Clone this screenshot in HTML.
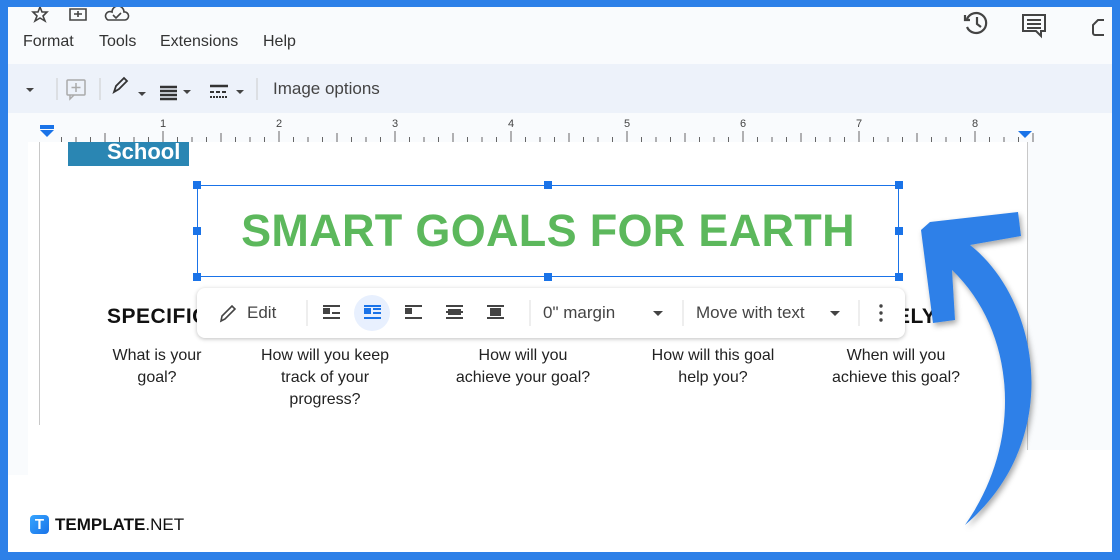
<!DOCTYPE html>
<html><head><meta charset="utf-8"><style>
*{margin:0;padding:0;box-sizing:border-box}
body{width:1120px;height:560px;background:#2d80e8;position:relative;overflow:hidden;font-family:"Liberation Sans",Arial,sans-serif}
.frame{position:absolute;left:8px;top:7px;width:1104px;height:545px;background:#fff;overflow:hidden}
.abs{position:absolute}
.menu{font-size:16px;color:#333;top:26px}
.tb{left:0;top:57px;width:1104px;height:49px;background:#edf2fa}
.ruler{left:0;top:106px;width:1104px;height:29px;background:#f9fbfd}
.col{font-size:16px;color:#222;text-align:center;line-height:22px;top:338px}
.h{font-size:21px;font-weight:bold;color:#111;top:298px;letter-spacing:.5px}
.hd{width:8px;height:8px;background:#1a73e8;position:absolute}
</style></head><body>
<div class="frame">
 <div class="abs" style="left:0;top:0;width:1104px;height:57px;background:#f9fbfd"></div>
 <svg class="abs" style="left:22px;top:0" width="110" height="16" viewBox="0 0 110 16" fill="none" stroke="#444" stroke-width="1.6">
  <path d="M10 0 L12 5 L17 5 L13 9 L15 14 L10 11 L5 14 L7 9 L3 5 L8 5 Z"/>
  <path d="M40 2 H56 V13 H40 Z M44 7 H52 M48 4 V10"/>
  <path d="M78 13 H95 A4 4 0 0 0 94 5 A6 6 0 0 0 82 5 A4 4 0 0 0 78 13 Z M83 8 L86 11 L91 6"/>
 </svg>
 <div class="abs menu" style="left:15px">Format</div>
 <div class="abs menu" style="left:91px">Tools</div>
 <div class="abs menu" style="left:152px">Extensions</div>
 <div class="abs menu" style="left:255px">Help</div>
 <svg class="abs" style="left:955px;top:4px" width="150" height="30" viewBox="0 0 150 30" fill="none" stroke="#444" stroke-width="2.2">
  <path d="M4 8 A10 10 0 1 1 4 16 M2 4 V9 H7 M14 6 V13 L18 16"/>
  <path d="M60 4 H82 V20 H78 V25 L73 20 H60 Z M64 9 H78 M64 13 H78 M64 17 H78" stroke-width="2"/>
  <path d="M141 24 H132 A2 2 0 0 1 130 22 V14 L135 9 H141" stroke-width="2"/>
 </svg>
 <div class="abs tb">
  <svg class="abs" style="left:0;top:0" width="380" height="49" viewBox="0 0 380 49">
   <path d="M18 24 h8 l-4 4z" fill="#444"/>
   <line x1="49" y1="14" x2="49" y2="36" stroke="#ccc"/>
   <rect x="59" y="16" width="18" height="15" rx="1" fill="none" stroke="#aaa" stroke-width="1.5"/>
   <path d="M62 31 v4 l4-4 M68 19 v9 M63.5 23.5 h9" stroke="#aaa" stroke-width="1.5" fill="none"/>
   <line x1="92" y1="14" x2="92" y2="36" stroke="#ccc"/>
   <path d="M106 28 l2-6 l8-8 l3 3 l-8 8z" fill="none" stroke="#333" stroke-width="1.8"/>
   <path d="M130 28 h8 l-4 4z M175 26 h8 l-4 4z M228 26 h8 l-4 4z" fill="#444"/>
   <path d="M152 23 h17 M152 27 h17 M152 31 h17 M152 35 h17" stroke="#333" stroke-width="2.5"/>
   <path d="M202 22 h18" stroke="#333" stroke-width="2.5"/>
   <path d="M202 28 h4 M208 28 h4 M214 28 h4 M202 33 h2 M205 33 h2 M208 33 h2 M211 33 h2 M214 33 h2 M217 33 h2" stroke="#333" stroke-width="2"/>
   <line x1="249" y1="14" x2="249" y2="36" stroke="#ccc"/>
  </svg>
  <div class="abs" style="left:265px;top:15px;font-size:17px;color:#444">Image options</div>
 </div>
 <div class="abs ruler">
  <svg class="abs" style="left:0;top:0" width="1104" height="29">
   <g stroke="#666" stroke-width="1" id="ticks"></g>
  </svg>
 </div>
 <div class="abs" style="left:0;top:135px;width:20px;height:333px;background:#f9fbfd"></div>
 <div class="abs" style="left:31px;top:135px;width:1px;height:283px;background:#c8c8c8"></div>
 <div class="abs" style="left:1019px;top:135px;width:85px;height:308px;background:#f9fbfd;border-left:1px solid #c8c8c8"></div>
 <div class="abs" style="left:60px;top:135px;width:121px;height:24px;background:#2a86b3;color:#fff;font-weight:bold;font-size:22px;line-height:20px;padding-left:39px">School</div>
 <div class="abs" style="left:189px;top:178px;width:702px;height:92px;border:1px solid #1a73e8"></div>
 <div class="abs" style="left:189px;top:198px;width:702px;text-align:center;color:#5cb85c;font-weight:bold;font-size:45px;letter-spacing:0.3px">SMART GOALS FOR EARTH</div>
 <div class="hd" style="left:185px;top:174px"></div><div class="hd" style="left:536px;top:174px"></div><div class="hd" style="left:887px;top:174px"></div>
 <div class="hd" style="left:185px;top:220px"></div><div class="hd" style="left:887px;top:220px"></div>
 <div class="hd" style="left:185px;top:266px"></div><div class="hd" style="left:536px;top:266px"></div><div class="hd" style="left:887px;top:266px"></div>
 <div class="abs h" style="left:99px">SPECIFIC</div>
 <div class="abs h" style="left:888px">ELY</div>
 <div class="abs col" style="left:89px;width:120px">What is your<br>goal?</div>
 <div class="abs col" style="left:227px;width:180px">How will you keep<br>track of your<br>progress?</div>
 <div class="abs col" style="left:425px;width:180px">How will you<br>achieve your goal?</div>
 <div class="abs col" style="left:615px;width:180px">How will this goal<br>help you?</div>
 <div class="abs col" style="left:798px;width:180px">When will you<br>achieve this goal?</div>
 <div class="abs" style="left:189px;top:281px;width:708px;height:50px;background:#fff;border-radius:8px;box-shadow:0 1px 4px rgba(0,0,0,.25)">
  <svg class="abs" style="left:0;top:0" width="708" height="50" viewBox="0 0 708 50">
   <path d="M24 33 l1-5 l10-10 l3 3 l-10 10z" fill="none" stroke="#444" stroke-width="1.6"/>
   <line x1="110" y1="12" x2="110" y2="38" stroke="#ddd"/>
   <g fill="#444"><rect x="126" y="20" width="7" height="6"/><rect x="135" y="24" width="8" height="2"/><rect x="126" y="17" width="17" height="2"/><rect x="126" y="29" width="17" height="2"/></g>
   <circle cx="175" cy="25" r="18" fill="#e8f0fe"/>
   <g fill="#1a73e8"><rect x="167" y="20" width="7" height="6"/><rect x="176" y="20" width="8" height="2"/><rect x="176" y="24" width="8" height="2"/><rect x="167" y="17" width="17" height="2"/><rect x="167" y="29" width="17" height="2"/></g>
   <g fill="#444"><rect x="208" y="20" width="7" height="6"/><rect x="208" y="17" width="17" height="2"/><rect x="208" y="29" width="17" height="2"/></g>
   <g fill="#444"><rect x="249" y="17" width="17" height="2"/><rect x="251" y="21" width="13" height="6"/><rect x="249" y="23" width="17" height="2"/><rect x="249" y="29" width="17" height="2"/></g>
   <g fill="#444"><rect x="290" y="17" width="17" height="2"/><rect x="293" y="20" width="11" height="8"/><rect x="290" y="29" width="17" height="2"/></g>
   <line x1="333" y1="12" x2="333" y2="38" stroke="#ddd"/>
   <path d="M456 23 h10 l-5 5z M633 23 h10 l-5 5z" fill="#444"/>
   <line x1="486" y1="12" x2="486" y2="38" stroke="#ddd"/>
   <line x1="662" y1="12" x2="662" y2="38" stroke="#ddd"/>
   <circle cx="684" cy="18" r="1.7" fill="#444"/><circle cx="684" cy="25" r="1.7" fill="#444"/><circle cx="684" cy="32" r="1.7" fill="#444"/>
  </svg>
  <div class="abs" style="left:50px;top:15px;font-size:17px;color:#444">Edit</div>
  <div class="abs" style="left:346px;top:15px;font-size:17px;color:#444">0" margin</div>
  <div class="abs" style="left:499px;top:15px;font-size:17px;color:#444">Move with text</div>
 </div>
 <div class="abs" style="left:22px;top:508px;width:19px;height:19px;border-radius:4px;background:linear-gradient(135deg,#36a5ff,#1a73e8);color:#fff;font-weight:bold;font-size:15px;text-align:center;line-height:19px">T</div>
 <div class="abs" style="left:47px;top:508px;font-size:17px;color:#111;line-height:19px"><b>TEMPLATE</b>.NET</div>
</div>
<svg class="abs" style="left:0;top:0" width="1120" height="560" viewBox="0 0 1120 560">
 <defs><filter id="sh" x="-20%" y="-20%" width="140%" height="140%"><feDropShadow dx="2" dy="3" stdDeviation="3" flood-opacity="0.35"/></filter></defs>
 <path filter="url(#sh)" fill="#2d80e8" d="M921 230 L930 222 L1018 212 L1021 236 L970 245 C1040 300 1065 440 965 525 C1025 440 1015 330 952 270 L955 320 L933 323 Z"/>
</svg>
<script>
var g=document.getElementById('ticks'),s='';
for(var i=0;i<=70;i++){var x=39+i*14.5;if(x>1025)break;var h=(i%8==0)?0:(i%4==0?9:5);if(h)s+='<line x1="'+x+'" y1="'+(29-h)+'" x2="'+x+'" y2="29"/>';}
for(var n=1;n<=8;n++){var x=39+116*n;s+='<text x="'+x+'" y="14" font-size="11" fill="#444" stroke="none" text-anchor="middle" font-family="Liberation Sans">'+n+'</text><line x1="'+x+'" y1="18" x2="'+x+'" y2="29"/>';}
s+='<rect x="32" y="12" width="14" height="4" fill="#1a73e8" stroke="none"/><path d="M32 17 h14 l-7 7z" fill="#1a73e8" stroke="none"/><path d="M1010 18 h14 l-7 7z" fill="#1a73e8" stroke="none"/>';
g.innerHTML=s;
</script>
</body></html>
